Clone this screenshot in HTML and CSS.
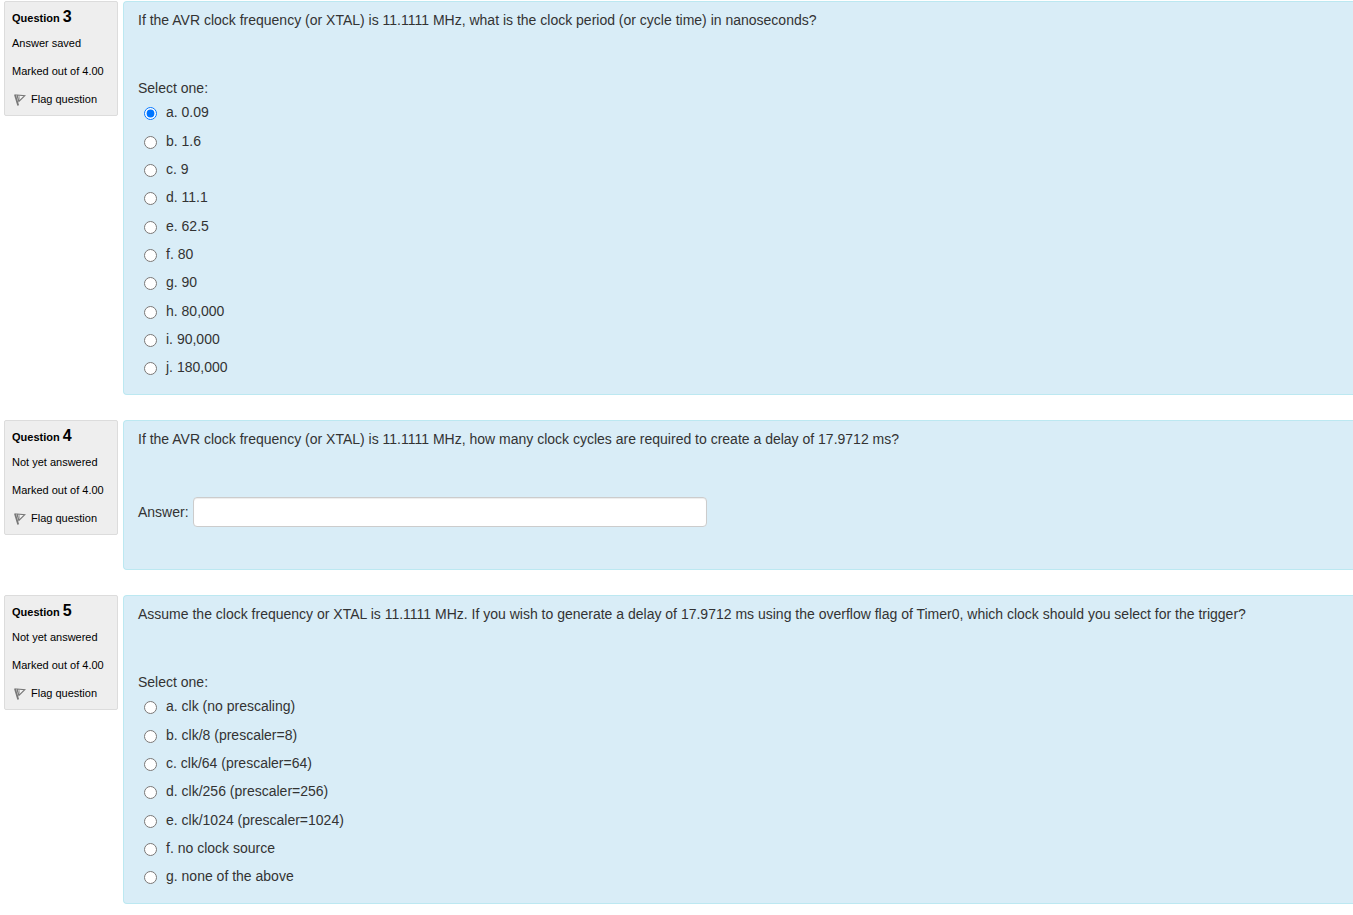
FILE: index.html
```html
<!DOCTYPE html>
<html lang="en">
<head>
	<meta charset="UTF-8">
	<title>Quiz</title>
	<link rel="stylesheet" href="styles.css">
</head>
<body>
	<svg class="sprite" aria-hidden="true">
		<symbol id="flag" viewBox="0 0 12 12">
			<path d="M0.9 0.6 L4.2 11.6" stroke="#777" stroke-width="1.8"/>
			<path d="M2.9 1 L10.8 1.7 L4.9 7.4 Z" fill="#f4f4f4" stroke="#777" stroke-width="1.2"/>
			<path d="M5 1.6 L5.2 5.8" stroke="#888" stroke-width="0.9"/>
		</symbol>
	</svg>
	<form class="quiz">
		<div class="que" id="q3">
			<div class="info">
				<h3 class="no">Question <span class="qno">3</span></h3>
				<div class="state">Answer saved</div>
				<div class="grade">Marked out of 4.00</div>
				<a class="flag" href="#q3"><svg class="flagicon"><use href="#flag"/></svg>Flag question</a>
			</div>
			<div class="formulation">
				<p class="qtext">If the AVR clock frequency (or XTAL) is 11.1111 MHz, what is the clock period (or cycle time) in nanoseconds?</p>
				<fieldset class="choices">
					<legend class="prompt">Select one:</legend>
					<div class="answer">
						<label><input type="radio" name="q3" checked>a. 0.09</label>
						<label><input type="radio" name="q3">b. 1.6</label>
						<label><input type="radio" name="q3">c. 9</label>
						<label><input type="radio" name="q3">d. 11.1</label>
						<label><input type="radio" name="q3">e. 62.5</label>
						<label><input type="radio" name="q3">f. 80</label>
						<label><input type="radio" name="q3">g. 90</label>
						<label><input type="radio" name="q3">h. 80,000</label>
						<label><input type="radio" name="q3">i. 90,000</label>
						<label><input type="radio" name="q3">j. 180,000</label>
					</div>
				</fieldset>
			</div>
		</div>

		<div class="que" id="q4">
			<div class="info">
				<h3 class="no">Question <span class="qno">4</span></h3>
				<div class="state">Not yet answered</div>
				<div class="grade">Marked out of 4.00</div>
				<a class="flag" href="#q4"><svg class="flagicon"><use href="#flag"/></svg>Flag question</a>
			</div>
			<div class="formulation">
				<p class="qtext">If the AVR clock frequency (or XTAL) is 11.1111 MHz, how many clock cycles are required to create a delay of 17.9712 ms?</p>
				<div class="shortanswer">
					<label for="q4answer">Answer:</label>
					<input type="text" id="q4answer" name="q4">
				</div>
			</div>
		</div>

		<div class="que" id="q5">
			<div class="info">
				<h3 class="no">Question <span class="qno">5</span></h3>
				<div class="state">Not yet answered</div>
				<div class="grade">Marked out of 4.00</div>
				<a class="flag" href="#q5"><svg class="flagicon"><use href="#flag"/></svg>Flag question</a>
			</div>
			<div class="formulation">
				<p class="qtext">Assume the clock frequency or XTAL is 11.1111 MHz. If you wish to generate a delay of 17.9712 ms using the overflow flag of Timer0, which clock should you select for the trigger?</p>
				<fieldset class="choices">
					<legend class="prompt">Select one:</legend>
					<div class="answer">
						<label><input type="radio" name="q5">a. clk (no prescaling)</label>
						<label><input type="radio" name="q5">b. clk/8 (prescaler=8)</label>
						<label><input type="radio" name="q5">c. clk/64 (prescaler=64)</label>
						<label><input type="radio" name="q5">d. clk/256 (prescaler=256)</label>
						<label><input type="radio" name="q5">e. clk/1024 (prescaler=1024)</label>
						<label><input type="radio" name="q5">f. no clock source</label>
						<label><input type="radio" name="q5">g. none of the above</label>
					</div>
				</fieldset>
			</div>
		</div>
	</form>
</body>
</html>
```
FILE: styles.css
```css
*{
	margin: 0;
	padding: 0;
	box-sizing: border-box;
}
body{
	font-family: "Liberation Sans", Arial, sans-serif;
	font-size: 14px;
	line-height: 20px;
	color: #333;
	background-color: #fff;
}
.sprite{
	display: none;
}
.quiz{
	display: flex;
	flex-direction: column;
	gap: 25px;
	padding: 1px 0 0 4px;
}
.que{
	display: flex;
	align-items: flex-start;
	gap: 5px;
}

/* question info */
.info{
	flex: none;
	display: flex;
	flex-direction: column;
	gap: 8px;
	width: 114px;
	padding: 5px 7px 6px;
	border: 1px solid #dcdcdc;
	border-radius: 2px;
	background-color: #eee;
	font-size: 11px;
	color: #000;
}
.no{
	margin-bottom: -3px;
	font-size: 11px;
	font-weight: bold;
}
.qno{
	font-size: 16px;
}
.flag{
	display: flex;
	align-items: center;
	gap: 5px;
	padding-left: 2px;
	color: #000;
	text-decoration: none;
}
.flagicon{
	width: 12px;
	height: 12px;
	margin-top: 2px;
}

/* question body */
.formulation{
	flex: 1;
	padding: 8px 14px;
	border: 1px solid #bce8f1;
	border-right: 0;
	border-radius: 4px 0 0 4px;
	background-color: #d9edf7;
}
.qtext{
	margin-bottom: 48px;
}
.choices{
	border: 0;
}
.answer{
	display: grid;
	grid-auto-rows: 29px 28px 28px;
	padding: 4px 0 0 6px;
}
.answer label{
	display: flex;
	align-items: flex-start;
	justify-self: start;
	gap: 9px;
}
.answer input{
	width: 13px;
	height: 13px;
	margin-top: 5px;
}
.shortanswer{
	display: flex;
	align-items: center;
	gap: 4px;
	margin-bottom: 34px;
}
.shortanswer input{
	width: 514px;
	height: 30px;
	padding: 4px 6px;
	border: 1px solid #ccc;
	border-radius: 4px;
	box-shadow: inset 0 1px 1px rgba(0,0,0,.075);
	font: inherit;
	color: #555;
}
```
